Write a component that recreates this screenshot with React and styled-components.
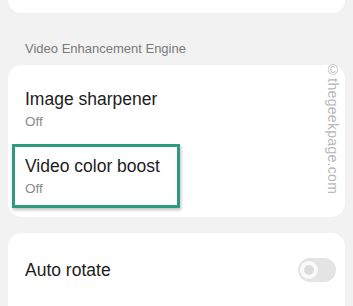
import styled, { createGlobalStyle } from 'styled-components';

const GlobalStyle = createGlobalStyle`
	html, body {
		margin: 0;
		padding: 0;
		background: #f2f2f2;
		font-family: 'Liberation Sans', Arial, sans-serif;
	}
`;

const App = () => {
	return (
		<>
			<GlobalStyle />
			<Page>
				<TopCard />
				<SectionTitle>Video Enhancement Engine</SectionTitle>
				<Card>
					<Item>
						<ItemTitle>Image sharpener</ItemTitle>
						<ItemValue>Off</ItemValue>
					</Item>
					<Item highlighted>
						<ItemTitle>Video color boost</ItemTitle>
						<ItemValue>Off</ItemValue>
					</Item>
				</Card>
				<LastCard>
					<SwitchRow>
						<ItemTitle>Auto rotate</ItemTitle>
						<Toggle>
							<Knob />
						</Toggle>
					</SwitchRow>
				</LastCard>
				<Watermark>©thegeekpage.com</Watermark>
			</Page>
		</>
	);
};

export default App;

const Page = styled.div`
	position: relative;
	height: 306px;
	overflow: hidden;
	padding: 0 8px;
`;

const TopCard = styled.div`
	height: 13px;
	background: #ffffff;
	border-radius: 0 0 14px 14px;
`;

const SectionTitle = styled.div`
	padding: 28px 17px 8px;
	font-size: 13px;
	line-height: 16px;
	color: #7a7a7a;
`;

const Card = styled.div`
	background: #ffffff;
	border-radius: 14px;
	padding: 23px 0 9px;
	display: flex;
	flex-direction: column;
	gap: 13px;
`;

const Item = styled.div`
	display: flex;
	flex-direction: column;
	width: ${(p) => (p.highlighted ? '152px' : 'auto')};
	margin-left: ${(p) => (p.highlighted ? '4px' : '0')};
	padding: ${(p) => (p.highlighted ? '8px 0 7px 10px' : '0 17px')};
	border: ${(p) => (p.highlighted ? '3px solid #2b9c7c' : 'none')};
	box-shadow: ${(p) => (p.highlighted ? '1px 2px 3px rgba(0, 0, 0, 0.25)' : 'none')};
`;

const ItemTitle = styled.div`
	font-size: 17.5px;
	line-height: 22px;
	color: #1c1c1c;
`;

const ItemValue = styled.div`
	margin-top: 3px;
	font-size: 13.5px;
	line-height: 18px;
	color: #8a8a8a;
`;

const LastCard = styled.div`
	margin-top: 16px;
	background: #ffffff;
	border-radius: 14px;
	padding: 25px 9px 40px 17px;
`;

const SwitchRow = styled.div`
	display: flex;
	align-items: center;
	justify-content: space-between;
	height: 24px;
`;

const Toggle = styled.div`
	width: 38px;
	height: 24px;
	border-radius: 12px;
	background: #e4e4e4;
	display: flex;
	align-items: center;
	padding-left: 2px;
	box-sizing: border-box;
`;

const Knob = styled.div`
	width: 18px;
	height: 18px;
	border-radius: 50%;
	border: 4px solid #fafafa;
	box-sizing: border-box;
	background: #dcdcdc;
`;

const Watermark = styled.div`
	position: absolute;
	left: 325px;
	top: 62px;
	writing-mode: vertical-rl;
	font-size: 14px;
	letter-spacing: 0.3px;
	color: #b8b8b8;
`;
